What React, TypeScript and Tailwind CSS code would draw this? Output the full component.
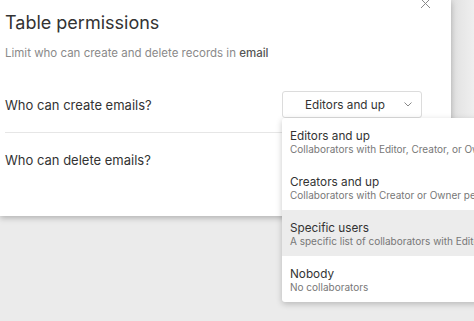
import React from "react";

const items = [
  { t: "Editors and up", s: "Collaborators with Editor, Creator, or Owner permissions" },
  { t: "Creators and up", s: "Collaborators with Creator or Owner permissions" },
  { t: "Specific users", s: "A specific list of collaborators with Editor permissions" },
  { t: "Nobody", s: "No collaborators" },
];

export default function App() {
  return (
    <div
      className="relative w-[474px] h-[321px] overflow-hidden bg-[#ebebeb]"
      style={{ fontFamily: "Inter, 'Noto Sans', sans-serif" }}
    >
      <div className="absolute left-[451px] top-0 w-[23px] h-[216px] bg-gradient-to-r from-[#e0e0e0] to-[#efefef]" />
      <div className="relative w-[451px] h-[216px] bg-white shadow-[0_2px_6px_rgba(0,0,0,0.25)]">
        <svg className="absolute left-[420px] top-[-2px]" width="11" height="11" viewBox="0 0 11 11">
          <path d="M1 1 L10 10 M10 1 L1 10" stroke="#8a8a8a" strokeWidth="1" fill="none" />
        </svg>
        <div className="pl-[5px] pt-[11px]">
          <div className="text-[18px] leading-[24px] text-[#333]">Table permissions</div>
          <div className="mt-[10px] text-[11.5px] leading-[16px] text-[#8a8a8a]">
            Limit who can create and delete records in <span className="text-[#555] font-medium">email</span>
          </div>
          <div className="mt-[30px] flex items-center h-[27px] pr-[29px]">
            <div className="flex-1 text-[13px] leading-[16px] text-[#333]">Who can create emails?</div>
            <div className="w-[140px] h-[27px] border border-[#dcdcdc] rounded-[3px] flex items-center pl-[22px] pr-[8px]">
              <span className="flex-1 text-[11.75px] leading-[16px] text-[#333]">Editors and up</span>
              <svg width="8" height="5" viewBox="0 0 8 5" className="mr-[1px]">
                <path d="M0.5 0.5 L4 4 L7.5 0.5" stroke="#888" strokeWidth="1" fill="none" />
              </svg>
            </div>
          </div>
          <div className="mt-[14px] h-px bg-[#e6e6e6] mr-[20px]" />
          <div className="mt-[19px] text-[13px] leading-[16px] text-[#333]">Who can delete emails?</div>
        </div>
      </div>
      <div className="absolute left-[282px] top-[118px] w-[230px] bg-white rounded-[3px] shadow-[0_2px_6px_rgba(0,0,0,0.22)] overflow-hidden">
        {items.map((it, i) => (
          <div
            key={it.t}
            className={`h-[46px] pl-[8px] pt-[11px] whitespace-nowrap ${i === 2 ? "bg-[#ececec]" : ""}`}
          >
            <div className="text-[11.75px] leading-[14px] text-[#333]">{it.t}</div>
            <div className="text-[10px] leading-[13px] text-[#777]">{it.s}</div>
          </div>
        ))}
      </div>
    </div>
  );
}
